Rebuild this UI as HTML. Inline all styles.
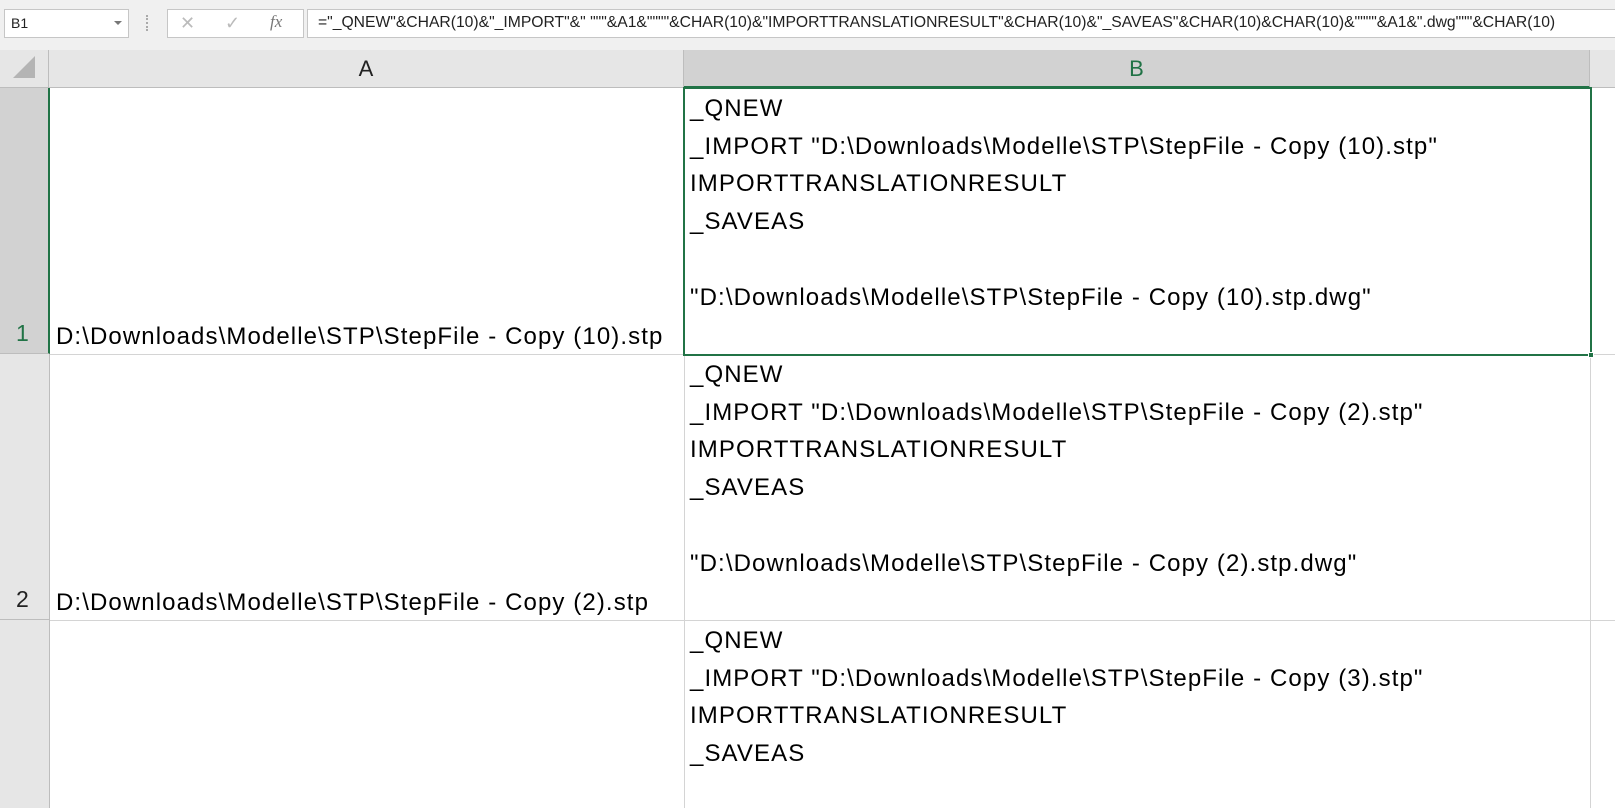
<!DOCTYPE html>
<html><head><meta charset="utf-8"><style>
*{margin:0;padding:0;box-sizing:border-box}
body{width:1615px;height:751px;overflow:hidden;background:#fff;font-family:"Liberation Sans",sans-serif;position:relative}
.abs{position:absolute}
.t{font-size:24px;letter-spacing:1.1px;color:#000;white-space:pre;line-height:37.7px}
</style></head><body>
<div class="abs" style="left:0;top:0;width:1615px;height:50px;background:#f0f0f0"></div>
<div class="abs" style="left:4px;top:9px;width:125px;height:29px;background:#fff;border:1px solid #c6c6c6"></div>
<div class="abs" style="left:11px;top:15px;font-size:14px;color:#222">B1</div>
<div class="abs" style="left:114px;top:21px;width:0;height:0;border-left:4px solid transparent;border-right:4px solid transparent;border-top:4px solid #777"></div>
<div class="abs" style="left:146px;top:15px;width:2px;height:16px;border-left:2px dotted #aaa"></div>
<div class="abs" style="left:167px;top:9px;width:137px;height:29px;background:#fff;border:1px solid #c6c6c6"></div>
<div class="abs" style="left:180px;top:13px;font-size:18px;color:#bbb">✕</div>
<div class="abs" style="left:225px;top:13px;font-size:18px;color:#bbb">✓</div>
<div class="abs" style="left:270px;top:12px;font-size:17px;color:#777;font-family:'Liberation Serif',serif;font-style:italic">fx</div>
<div class="abs" style="left:307px;top:9px;width:1310px;height:29px;background:#fff;border:1px solid #c6c6c6"></div>
<div class="abs" style="left:318px;top:14px;font-size:15.7px;color:#222;white-space:pre">="_QNEW"&amp;CHAR(10)&amp;"_IMPORT"&amp;" """&amp;A1&amp;""""&amp;CHAR(10)&amp;"IMPORTTRANSLATIONRESULT"&amp;CHAR(10)&amp;"_SAVEAS"&amp;CHAR(10)&amp;CHAR(10)&amp;""""&amp;A1&amp;".dwg"""&amp;CHAR(10)</div>
<div class="abs" style="left:0;top:50px;width:1615px;height:38px;background:#e6e6e6;border-bottom:1px solid #bdbdbd"></div>
<div class="abs" style="left:0;top:50px;width:49px;height:38px;border-right:1px solid #bdbdbd"></div>
<div class="abs" style="left:13px;top:56px;width:0;height:0;border-left:22px solid transparent;border-bottom:22px solid #b4b4b4"></div>
<div class="abs" style="left:49px;top:50px;width:635px;height:38px;border-right:1px solid #bdbdbd;text-align:center;font-size:22px;line-height:38px;color:#222">A</div>
<div class="abs" style="left:684px;top:50px;width:906px;height:38px;background:#d2d2d2;border-right:1px solid #bdbdbd;border-bottom:2px solid #217346;text-align:center;font-size:22px;line-height:38px;color:#217346">B</div>
<div class="abs" style="left:0;top:88px;width:50px;height:720px;background:#e6e6e6;border-right:1px solid #bdbdbd"></div>
<div class="abs" style="left:0;top:88px;width:50px;height:266px;background:#d2d2d2;border-right:2px solid #217346;border-bottom:1px solid #bdbdbd"></div>
<div class="abs" style="left:0;top:354px;width:50px;height:266px;border-bottom:1px solid #bdbdbd"></div>
<div class="abs" style="left:16px;top:320px;font-size:23px;color:#217346">1</div>
<div class="abs" style="left:16px;top:586px;font-size:23px;color:#222">2</div>
<div class="abs" style="left:50px;top:354px;width:1565px;height:1px;background:#d4d4d4"></div>
<div class="abs" style="left:50px;top:620px;width:1565px;height:1px;background:#d4d4d4"></div>
<div class="abs" style="left:684px;top:88px;width:1px;height:720px;background:#d4d4d4"></div>
<div class="abs" style="left:1590px;top:88px;width:1px;height:720px;background:#d4d4d4"></div>
<div class="abs" style="left:683px;top:87px;width:909px;height:269px;border:2px solid #217346"></div>
<div class="abs" style="left:1588px;top:352px;width:6px;height:6px;background:#217346;border:1px solid #fff"></div>
<div class="abs t" style="left:56px;top:318px">D:\Downloads\Modelle\STP\StepFile - Copy (10).stp</div>
<div class="abs t" style="left:56px;top:584px">D:\Downloads\Modelle\STP\StepFile - Copy (2).stp</div>
<div class="abs t" style="left:690px;top:90px">_QNEW
_IMPORT "D:\Downloads\Modelle\STP\StepFile - Copy (10).stp"
IMPORTTRANSLATIONRESULT
_SAVEAS

"D:\Downloads\Modelle\STP\StepFile - Copy (10).stp.dwg"</div>
<div class="abs t" style="left:690px;top:356px">_QNEW
_IMPORT "D:\Downloads\Modelle\STP\StepFile - Copy (2).stp"
IMPORTTRANSLATIONRESULT
_SAVEAS

"D:\Downloads\Modelle\STP\StepFile - Copy (2).stp.dwg"</div>
<div class="abs t" style="left:690px;top:622px">_QNEW
_IMPORT "D:\Downloads\Modelle\STP\StepFile - Copy (3).stp"
IMPORTTRANSLATIONRESULT
_SAVEAS</div>
</body></html>
